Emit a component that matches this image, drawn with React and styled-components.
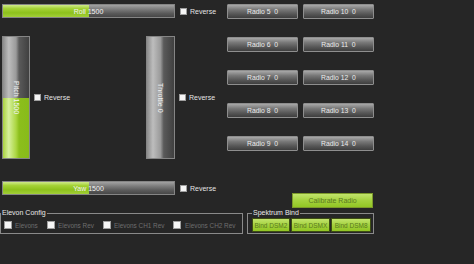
import React from "react";
import styled, { createGlobalStyle } from "styled-components";

const Global = createGlobalStyle`
  html, body { margin: 0; padding: 0; background: #262626; }
  body { font-family: "Liberation Sans", Arial, sans-serif; font-size: 7px; color: #e6e6e6; }
  * { box-sizing: border-box; }
`;

const Page = styled.div`
  width: 474px;
  height: 264px;
  background: #262626;
  padding-top: 4px;
  display: flex;
  flex-direction: column;
`;

const Top = styled.div`
  display: flex;
  padding-left: 2px;
`;

const LeftPanel = styled.div`
  width: 225px;
  display: flex;
  flex-direction: column;
`;

const BarRow = styled.div`
  display: flex;
  align-items: center;
  margin-top: ${(p) => p.$mt || 0}px;
`;

const MidRow = styled.div`
  display: flex;
  margin-top: 18px;
`;

const VGroup = styled.div`
  width: ${(p) => p.$w}px;
  display: flex;
  align-items: center;
`;

const HTrack = styled.div`
  position: relative;
  width: ${(p) => p.$w}px;
  height: 14px;
  border: 1px solid #858585;
  background: linear-gradient(to bottom, #a2a2a2 0%, #7c7c7c 35%, #5a5a5a 70%, #474747 100%);
  overflow: hidden;
`;

const HFill = styled.div`
  position: absolute;
  left: 0;
  top: 0;
  bottom: 0;
  background: linear-gradient(to bottom, #cfe98a 0%, #a4d235 30%, #8dc11c 65%, #a2cf38 100%);
`;

const BarText = styled.span`
  position: absolute;
  inset: 0;
  display: flex;
  align-items: center;
  justify-content: center;
  color: #f4f4f4;
  font-size: 7px;
  white-space: pre;
  line-height: 1;
`;

const VTrack = styled.div`
  position: relative;
  width: ${(p) => p.$w}px;
  height: 123px;
  border: 1px solid #858585;
  background: linear-gradient(to right, #8c8c8c 0%, #bdbdbd 22%, #9a9a9a 50%, #5a5a5a 62%, #404040 100%);
  overflow: hidden;
`;

const VFill = styled.div`
  position: absolute;
  left: 0;
  right: 0;
  bottom: 0;
  background: linear-gradient(to right, #a9d240 0%, #d6f09c 22%, #abd642 50%, #8cbf1c 62%, #88bb1a 100%);
`;

const VText = styled.span`
  position: absolute;
  inset: 0;
  display: flex;
  align-items: center;
  justify-content: center;
  writing-mode: vertical-rl;
  color: #f4f4f4;
  font-size: 7px;
  white-space: pre;
  line-height: 1;
`;

const Check = styled.input.attrs({ type: "checkbox" })`
  appearance: none;
  margin: 0;
  width: ${(p) => p.$s || 7}px;
  height: ${(p) => p.$s || 7}px;
  background: #f6f6f6;
  border: 1px solid #a0a0a0;
  flex: none;
`;

const CheckLabel = styled.label`
  display: flex;
  align-items: center;
  gap: ${(p) => p.$gap || 3}px;
  margin-left: ${(p) => p.$ml || 0}px;
  color: ${(p) => (p.$disabled ? "#6e6e6e" : "#e4e4e4")};
  font-size: ${(p) => p.$fs || 7}px;
  white-space: nowrap;
`;

const RightPanel = styled.div`
  width: 147px;
  display: flex;
  flex-direction: column;
`;

const RadioGrid = styled.div`
  display: grid;
  grid-template-columns: 71px 71px;
  grid-auto-flow: column;
  grid-template-rows: repeat(5, 15px);
  column-gap: 5px;
  row-gap: 18px;
`;

const RadioBar = styled.div`
  height: 15px;
  border: 1px solid #8e8e8e;
  border-radius: 1px;
  background: linear-gradient(to bottom, #a8a8a8 0%, #787878 35%, #565656 70%, #3e3e3e 100%);
  display: flex;
  align-items: center;
  justify-content: center;
  color: #ececec;
  font-size: 6.8px;
  white-space: pre;
`;

const CalRow = styled.div`
  display: flex;
  justify-content: flex-end;
  margin-top: 42px;
  padding-right: 1px;
`;

const GreenButton = styled.button`
  width: ${(p) => p.$w}px;
  height: ${(p) => p.$h || 15}px;
  margin: 0;
  padding: 0;
  border: 1px solid ${(p) => p.$outline || "#7c9a2a"};
  background: linear-gradient(to bottom, #c2e46c 0%, #a4d23e 50%, #92c624 100%);
  color: #5a7a1e;
  font-family: "Liberation Sans", Arial, sans-serif;
  font-weight: normal;
  font-size: ${(p) => p.$fs || 7}px;
  white-space: nowrap;
  overflow: hidden;
`;

const Bottom = styled.div`
  display: flex;
  gap: 4px;
  margin-top: 1px;
`;

const Group = styled.fieldset`
  margin: 0;
  width: ${(p) => p.$w}px;
  border: 1px solid #8a8a8a;
  padding: ${(p) => p.$pad};
  min-width: 0;
`;

const Legend = styled.legend`
  padding: 0 1px;
  font-size: 7px;
  font-weight: normal;
  line-height: 8px;
  color: #e8e8e8;
`;

const ElevonRow = styled.div`
  display: grid;
  grid-template-columns: 43px 56px 70px auto;
  padding-left: 3px;
`;

const BindRow = styled.div`
  display: flex;
  gap: 1px;
`;

const radios = [
  "Radio 5  0",
  "Radio 6  0",
  "Radio 7  0",
  "Radio 8  0",
  "Radio 9  0",
  "Radio 10  0",
  "Radio 11  0",
  "Radio 12  0",
  "Radio 13  0",
  "Radio 14  0",
];

function HBar({ label, value, pct }) {
  return (
    <HTrack $w={173}>
      <HFill style={{ width: `${pct}%` }} />
      <BarText>{`${label} ${value}`}</BarText>
    </HTrack>
  );
}

function VBar({ label, value, pct, w }) {
  return (
    <VTrack $w={w}>
      <VFill style={{ height: `${pct}%` }} />
      <VText>{`${label} ${value}`}</VText>
    </VTrack>
  );
}

export default function App() {
  return (
    <>
      <Global />
      <Page>
        <Top>
          <LeftPanel>
            <BarRow>
              <HBar label="Roll" value="1500" pct={50} />
              <CheckLabel $ml={5}>
                <Check />
                Reverse
              </CheckLabel>
            </BarRow>
            <MidRow>
              <VGroup $w={144}>
                <VBar label="Pitch" value="1500" pct={50} w={28} />
                <CheckLabel $ml={4}>
                  <Check />
                  Reverse
                </CheckLabel>
              </VGroup>
              <VGroup $w={80}>
                <VBar label="Throttle" value="0" pct={0} w={29} />
                <CheckLabel $ml={4}>
                  <Check />
                  Reverse
                </CheckLabel>
              </VGroup>
            </MidRow>
            <BarRow $mt={22}>
              <HBar label="Yaw" value="1500" pct={50} />
              <CheckLabel $ml={5}>
                <Check />
                Reverse
              </CheckLabel>
            </BarRow>
          </LeftPanel>
          <RightPanel>
            <RadioGrid>
              {radios.map((r) => (
                <RadioBar key={r}>{r}</RadioBar>
              ))}
            </RadioGrid>
            <CalRow>
              <GreenButton $w={81}>Calibrate Radio</GreenButton>
            </CalRow>
          </RightPanel>
        </Top>
        <Bottom>
          <Group $w={243} $pad="4px 0 2px 0">
            <Legend>Elevon Config</Legend>
            <ElevonRow>
              <CheckLabel $disabled $fs={6.4}>
                <Check $s={8} />
                Elevons
              </CheckLabel>
              <CheckLabel $disabled $fs={6.4}>
                <Check $s={8} />
                Elevons Rev
              </CheckLabel>
              <CheckLabel $disabled $fs={6.4}>
                <Check $s={8} />
                Elevons CH1 Rev
              </CheckLabel>
              <CheckLabel $disabled $fs={6.4} $gap={4}>
                <Check $s={8} />
                Elevons CH2 Rev
              </CheckLabel>
            </ElevonRow>
          </Group>
          <Group $w={127} $pad="1px 2px 1px 4px">
            <Legend>Spektrum Bind</Legend>
            <BindRow>
              <GreenButton $w={38} $h={14} $fs={6.5} $outline="#3e4e14">Bind DSM2</GreenButton>
              <GreenButton $w={40} $h={14} $fs={6.5} $outline="#3e4e14">Bind DSMX</GreenButton>
              <GreenButton $w={40} $h={14} $fs={6.5} $outline="#3e4e14">Bind DSM8</GreenButton>
            </BindRow>
          </Group>
        </Bottom>
      </Page>
    </>
  );
}
